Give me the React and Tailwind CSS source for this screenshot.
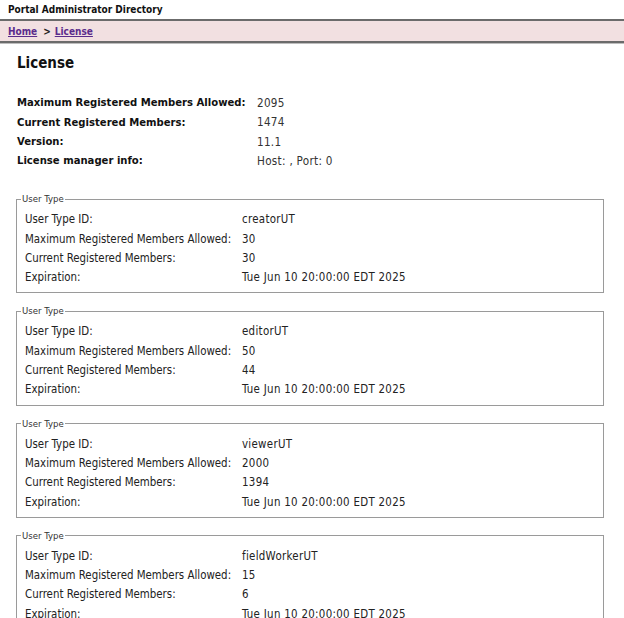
const summary = [
  ['Maximum Registered Members Allowed:', '2095'],
  ['Current Registered Members:', '1474'],
  ['Version:', '11.1'],
  ['License manager info:', 'Host: , Port: 0'],
];

const userTypes = [
  { id: 'creatorUT', max: '30', current: '30' },
  { id: 'editorUT', max: '50', current: '44' },
  { id: 'viewerUT', max: '2000', current: '1394' },
  { id: 'fieldWorkerUT', max: '15', current: '6' },
];

const EXPIRATION = 'Tue Jun 10 20:00:00 EDT 2025';

function UserTypeBox({ ut }) {
  const rows = [
    ['User Type ID:', ut.id],
    ['Maximum Registered Members Allowed:', ut.max],
    ['Current Registered Members:', ut.current],
    ['Expiration:', EXPIRATION],
  ];
  return (
    <fieldset className="border border-[#9a9a9a] ml-[16px] mr-[20px] mb-[12px] px-[8px] pt-[5px] pb-[5px]">
      <legend className="text-[9.5px] leading-[12px] text-[#333] px-[1px] ml-[-4px]">User Type</legend>
      {rows.map(([label, value]) => (
        <div key={label} className="flex h-[19.3px] items-center whitespace-nowrap text-[11.4px] text-[#222]">
          <span className="w-[217px] shrink-0">{label}</span>
          <span className="tracking-[0.3px]">{value}</span>
        </div>
      ))}
    </fieldset>
  );
}

export default function App() {
  return (
    <div className="bg-white min-h-screen text-black" style={{ fontFamily: '"DejaVu Sans Condensed", "DejaVu Sans", sans-serif' }}>
      <div className="h-[19px] flex items-center px-[8px] text-[10px] font-bold text-[#111]">
        Portal Administrator Directory
      </div>
      <div className="border-t-2 border-[#6b6b6b] bg-[#f2e0e1]">
        <div className="h-[20px] flex items-center px-[8px] text-[10px] font-bold">
          <a href="#" className="text-[#5b2c8c] underline">Home</a>
          <span className="ml-[6px] mr-[4px] text-[#222]">&gt;</span>
          <a href="#" className="text-[#5b2c8c] underline">License</a>
        </div>
        <div className="border-t-2 border-[#6b6b6b]"></div>
        <div className="border-t border-[#bdbdbd] bg-white"></div>
      </div>

      <h1 className="px-[17px] pt-[9px] text-[15px] font-bold leading-[20px] text-[#111]">License</h1>

      <div className="px-[17px] pt-[21px] pb-[22px]">
        {summary.map(([label, value]) => (
          <div key={label} className="flex h-[19.3px] items-center whitespace-nowrap text-[11.2px]">
            <span className="w-[240px] shrink-0 font-bold text-[#111]">{label}</span>
            <span className="text-[11.6px] tracking-[0.3px] text-[#333]">{value}</span>
          </div>
        ))}
      </div>

      {userTypes.map((ut) => (
        <UserTypeBox key={ut.id} ut={ut} />
      ))}
    </div>
  );
}
